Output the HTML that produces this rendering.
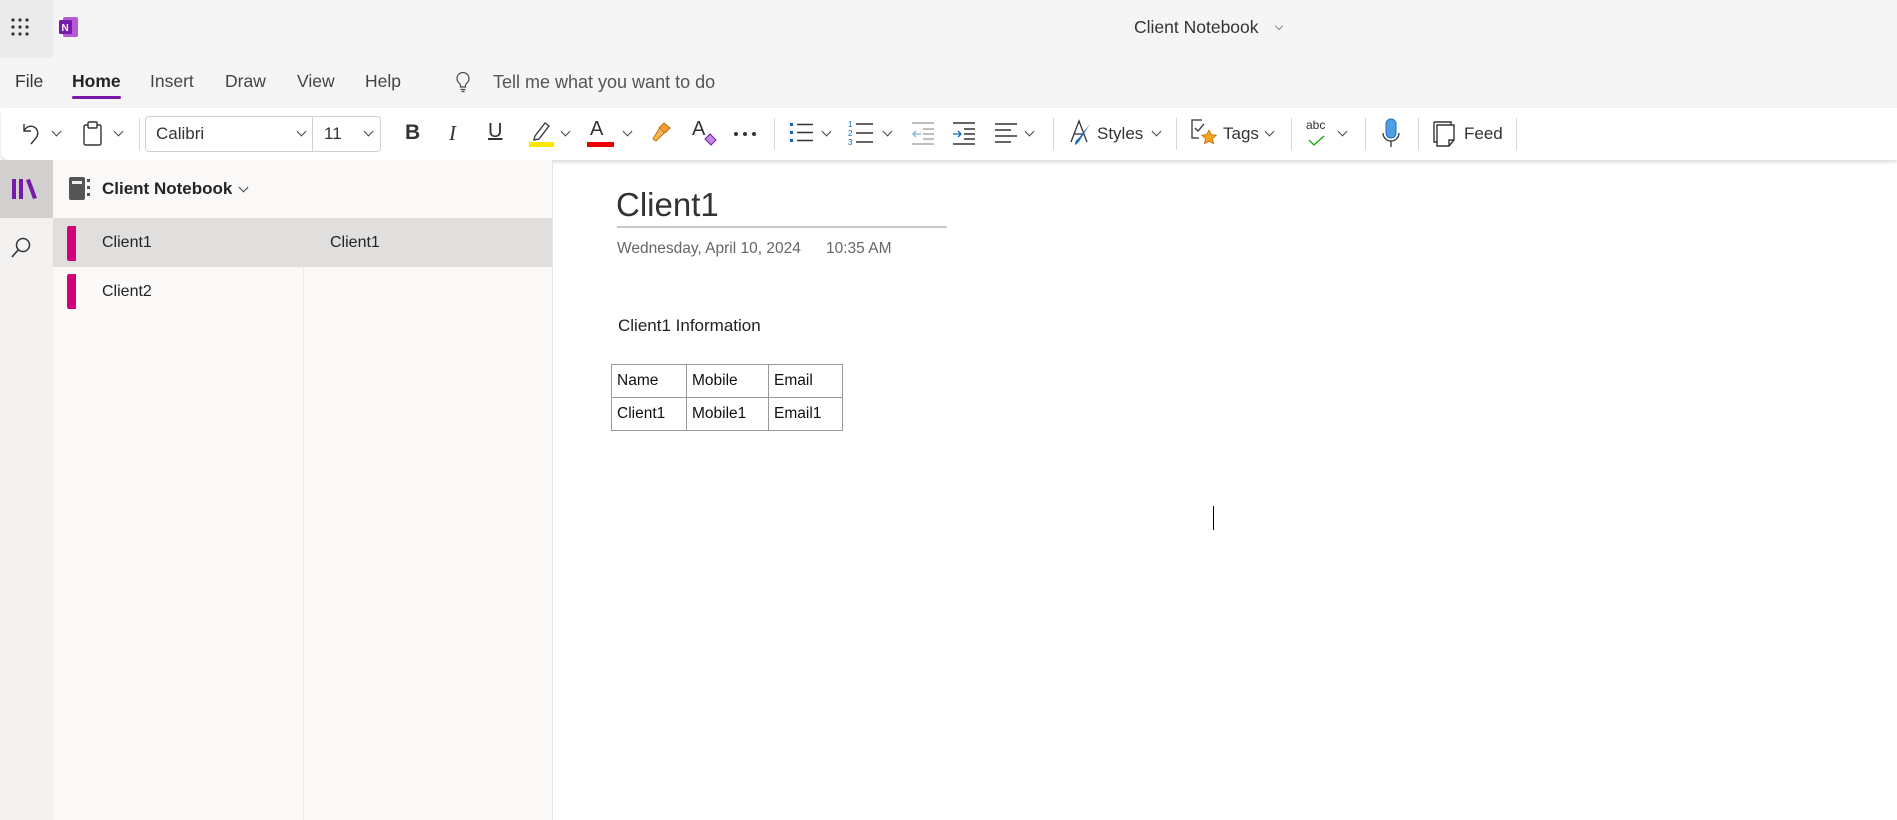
<!DOCTYPE html>
<html><head><meta charset="utf-8"><style>
*{margin:0;padding:0;box-sizing:border-box}
body{width:1897px;height:820px;overflow:hidden;background:#fff;font-family:"Liberation Sans",sans-serif;color:#242424;position:relative}
.a{position:absolute}
.t{position:absolute;white-space:nowrap}
.sep{position:absolute;top:118px;width:1px;height:32px;background:#d6d6d6}
.chev{position:absolute;width:7px;height:7px;border-right:1.4px solid #444;border-bottom:1.4px solid #444;transform:rotate(45deg)}
</style></head><body>
<div class="a" style="left:0;top:0;width:1897px;height:108px;background:#f5f5f5"></div>
<div class="a" style="left:0;top:0;width:53px;height:58px;background:#ebebeb"></div>
<svg class="a" style="left:10px;top:17px" width="20" height="20"><g fill="#333"><circle cx="3" cy="3" r="1.6"/><circle cx="10" cy="3" r="1.6"/><circle cx="17" cy="3" r="1.6"/><circle cx="3" cy="10" r="1.6"/><circle cx="10" cy="10" r="1.6"/><circle cx="17" cy="10" r="1.6"/><circle cx="3" cy="17" r="1.6"/><circle cx="10" cy="17" r="1.6"/><circle cx="17" cy="17" r="1.6"/></g></svg>
<svg class="a" style="left:58px;top:16px" width="22" height="22"><rect x="5" y="1" width="15" height="20" rx="2" fill="#b45ad3"/><rect x="1" y="4" width="13" height="14" rx="1.5" fill="#7719aa"/><text x="3.5" y="15" font-size="10" font-weight="bold" fill="#fff" font-family="Liberation Sans">N</text></svg>
<div class="t" style="left:1134px;top:17px;font-size:17.5px;color:#333">Client Notebook</div>
<div class="chev" style="left:1276px;top:23px;width:6px;height:6px;border-color:#888;border-width:1px"></div>
<div class="t" style="left:15px;top:71px;font-size:17.5px;color:#333">File</div>
<div class="t" style="left:72px;top:71px;font-size:17.5px;color:#242424;font-weight:bold">Home</div>
<div class="a" style="left:72px;top:96px;width:49px;height:3px;background:#7719aa;border-radius:2px"></div>
<div class="t" style="left:150px;top:71px;font-size:17.5px;color:#444">Insert</div>
<div class="t" style="left:225px;top:71px;font-size:17.5px;color:#444">Draw</div>
<div class="t" style="left:297px;top:71px;font-size:17.5px;color:#444">View</div>
<div class="t" style="left:365px;top:71px;font-size:17.5px;color:#444">Help</div>
<svg class="a" style="left:455px;top:71px" width="16" height="22"><path d="M8 1.5a6 6 0 0 0-3.5 10.9c.6.5 1 1.2 1 2V16h5v-1.6c0-.8.4-1.5 1-2A6 6 0 0 0 8 1.5zM5.5 18.5h5M6.5 20.5h3" fill="none" stroke="#444" stroke-width="1.2"/></svg>
<div class="t" style="left:493px;top:72px;font-size:18px;color:#555">Tell me what you want to do</div>
<div class="a" style="left:1px;top:108px;width:1896px;height:52px;background:#fff;border-radius:8px 0 0 8px;box-shadow:0 2px 4px rgba(0,0,0,.15)"></div>
<svg class="a" style="left:20px;top:121px" width="24" height="26"><path d="M4 3v7h7M4 10c2-4 6-6 10-4 4 2 5 7 2 11l-5 6" fill="none" stroke="#333" stroke-width="1.4"/></svg>
<div class="chev" style="left:53px;top:128px"></div>
<svg class="a" style="left:82px;top:120px" width="22" height="26"><rect x="2" y="5" width="17" height="20" rx="1.5" fill="none" stroke="#333" stroke-width="1.4"/><rect x="6" y="2" width="9" height="6" rx="1" fill="#fff" stroke="#333" stroke-width="1.4"/></svg>
<div class="chev" style="left:115px;top:128px"></div>
<div class="sep" style="left:139px"></div>
<div class="a" style="left:145px;top:116px;width:236px;height:36px;border:1px solid #d1d1d1;border-radius:4px"></div>
<div class="a" style="left:312px;top:117px;width:1px;height:34px;background:#d1d1d1"></div>
<div class="t" style="left:156px;top:124px;font-size:17px;color:#333">Calibri</div>
<div class="chev" style="left:298px;top:128px"></div>
<div class="t" style="left:324px;top:124px;font-size:17px;color:#333">11</div>
<div class="chev" style="left:365px;top:128px"></div>
<div class="t" style="left:405px;top:121px;font-size:21px;font-weight:bold;color:#333">B</div>
<div class="t" style="left:449px;top:121px;font-size:21px;font-style:italic;font-family:'Liberation Serif',serif;color:#333">I</div>
<div class="t" style="left:488px;top:120px;font-size:20px;text-decoration:underline;color:#333">U</div>
<svg class="a" style="left:527px;top:118px" width="28" height="30"><path d="M8 18l10-13 4 3-10 13-5 1z" fill="none" stroke="#333" stroke-width="1.3"/><rect x="2" y="24" width="25" height="5" fill="#ffe600"/></svg>
<div class="chev" style="left:562px;top:128px"></div>
<div class="t" style="left:590px;top:118px;font-size:20px;color:#333">A</div>
<div class="a" style="left:587px;top:142px;width:27px;height:5px;background:#e00"></div>
<div class="chev" style="left:624px;top:128px"></div>
<svg class="a" style="left:650px;top:120px" width="24" height="26"><path d="M14 3l6 5-5 5-6-5z" fill="#f0a030" stroke="#c56a00"/><path d="M9 9l-6 10 3 2 8-8" fill="#f7b955" stroke="#c56a00"/></svg>
<div class="t" style="left:692px;top:118px;font-size:20px;color:#333">A</div>
<svg class="a" style="left:704px;top:133px" width="14" height="14"><path d="M6 1l6 6-5 5-6-6z" fill="#c08be0" stroke="#7719aa"/></svg>
<svg class="a" style="left:733px;top:131px" width="24" height="6"><g fill="#333"><circle cx="3" cy="3" r="2"/><circle cx="12" cy="3" r="2"/><circle cx="21" cy="3" r="2"/></g></svg>
<div class="sep" style="left:774px"></div>
<svg class="a" style="left:789px;top:121px" width="26" height="24"><g fill="#0f6cbd"><rect x="1" y="2" width="3" height="3"/><rect x="1" y="10" width="3" height="3"/><rect x="1" y="18" width="3" height="3"/></g><g stroke="#333" stroke-width="1.4"><path d="M8 3.5h16M8 11.5h16M8 19.5h16"/></g></svg>
<div class="chev" style="left:823px;top:128px"></div>
<svg class="a" style="left:847px;top:119px" width="28" height="28"><g fill="#0f6cbd" font-size="8" font-family="Liberation Sans"><text x="1" y="8">1</text><text x="1" y="17">2</text><text x="1" y="26">3</text></g><g stroke="#333" stroke-width="1.4"><path d="M9 5h17M9 14h17M9 23h17"/></g></svg>
<div class="chev" style="left:884px;top:128px"></div>
<svg class="a" style="left:911px;top:121px" width="24" height="24"><g stroke="#aaa" stroke-width="1.4"><path d="M1 2h22M12 8h11M12 13h11M12 18h11M1 23h22"/></g><path d="M10 13H2m3-3-3 3 3 3" fill="none" stroke="#7fb3e0" stroke-width="1.3"/></svg>
<svg class="a" style="left:952px;top:121px" width="24" height="24"><g stroke="#333" stroke-width="1.4"><path d="M1 2h22M12 8h11M12 13h11M12 18h11M1 23h22"/></g><path d="M1 13h8m-3-3 3 3-3 3" fill="none" stroke="#0f6cbd" stroke-width="1.3"/></svg>
<svg class="a" style="left:994px;top:121px" width="24" height="24"><g stroke="#333" stroke-width="1.4"><path d="M1 3h22M1 9h16M1 15h22M1 21h16"/></g></svg>
<div class="chev" style="left:1026px;top:128px"></div>
<div class="sep" style="left:1053px"></div>
<svg class="a" style="left:1068px;top:118px" width="26" height="30"><path d="M3 24L11 3l8 21M6 16h10" fill="none" stroke="#333" stroke-width="1.3"/><path d="M22 6L12 22c-1 2-3 4-5 5 0-3 1-5 3-6z" fill="#0f6cbd"/></svg>
<div class="t" style="left:1097px;top:124px;font-size:17px;color:#333">Styles</div>
<div class="chev" style="left:1153px;top:128px"></div>
<div class="sep" style="left:1176px"></div>
<svg class="a" style="left:1190px;top:118px" width="28" height="30"><path d="M12 2H2v18h7" fill="none" stroke="#333" stroke-width="1.3"/><path d="M5 10l3 3 6-7" fill="none" stroke="#333" stroke-width="1.3"/><path d="M19 12l2.2 4.6 5 .6-3.7 3.4 1 5-4.5-2.5-4.5 2.5 1-5-3.7-3.4 5-.6z" fill="#f7a520" stroke="#c56a00" stroke-width=".8"/></svg>
<div class="t" style="left:1223px;top:124px;font-size:17px;color:#333">Tags</div>
<div class="chev" style="left:1266px;top:128px"></div>
<div class="sep" style="left:1291px"></div>
<div class="t" style="left:1306px;top:118px;font-size:12px;color:#333">abc</div>
<svg class="a" style="left:1307px;top:135px" width="20" height="12"><path d="M2 5l5 5 10-9" fill="none" stroke="#13a10e" stroke-width="1.3"/></svg>
<div class="chev" style="left:1339px;top:128px"></div>
<div class="sep" style="left:1365px"></div>
<svg class="a" style="left:1381px;top:118px" width="20" height="32"><rect x="5" y="1" width="10" height="19" rx="5" fill="#4f9ee6" stroke="#1d6fb8"/><path d="M2 15a8 8 0 0 0 16 0M10 23v6" fill="none" stroke="#333" stroke-width="1.3"/></svg>
<div class="sep" style="left:1418px"></div>
<svg class="a" style="left:1432px;top:120px" width="26" height="28"><path d="M5 5h17v15l-5 6H5z" fill="none" stroke="#333" stroke-width="1.4"/><path d="M2 2h17v3M2 2v20h3M22 20h-5v6" fill="none" stroke="#333" stroke-width="1.4"/></svg>
<div class="t" style="left:1464px;top:124px;font-size:17px;color:#333">Feed</div>
<div class="sep" style="left:1516px"></div>
<div class="a" style="left:0;top:160px;width:53px;height:660px;background:#f3f2f1"></div>
<div class="a" style="left:0;top:160px;width:53px;height:58px;background:#d2d0ce"></div>
<svg class="a" style="left:11px;top:178px" width="28" height="22"><g fill="#7719aa"><rect x="1" y="1" width="4" height="20"/><rect x="8" y="1" width="4" height="20"/><path d="M15 2l4-1 7 19-4 1z"/></g></svg>
<svg class="a" style="left:9px;top:236px" width="24" height="24"><circle cx="14" cy="9" r="6.5" fill="none" stroke="#333" stroke-width="1.5"/><path d="M9.5 13.5L3 21" stroke="#333" stroke-width="1.6"/></svg>
<div class="a" style="left:53px;top:160px;width:500px;height:660px;background:#faf9f8;border-right:1px solid #e5e5e5"></div>
<div class="a" style="left:303px;top:218px;width:1px;height:602px;background:#ebeae8"></div>
<svg class="a" style="left:68px;top:176px" width="24" height="26"><rect x="1" y="1" width="16" height="23" rx="2" fill="#555"/><rect x="4" y="5" width="10" height="3" fill="#eee"/><g fill="#555"><rect x="19" y="3" width="3" height="3"/><rect x="19" y="10" width="3" height="3"/><rect x="19" y="17" width="3" height="3"/></g></svg>
<div class="t" style="left:102px;top:179px;font-size:17px;font-weight:bold;color:#242424">Client Notebook</div>
<div class="chev" style="left:240px;top:184px"></div>
<div class="a" style="left:53px;top:218px;width:499px;height:49px;background:#e1dfdd"></div>
<svg class="a" style="left:64px;top:225px" width="14" height="38"><path d="M4 1h8v35H4l-1-2V3z" fill="#d3007a"/></svg>
<svg class="a" style="left:64px;top:273px" width="14" height="38"><path d="M4 1h8v35H4l-1-2V3z" fill="#d3007a"/></svg>
<div class="t" style="left:102px;top:234px;font-size:16px;color:#242424">Client1</div>
<div class="t" style="left:330px;top:234px;font-size:16px;color:#242424">Client1</div>
<div class="t" style="left:102px;top:283px;font-size:16px;color:#242424">Client2</div>
<div class="t" style="left:616px;top:186px;font-size:33px;color:#333">Client1</div>
<div class="a" style="left:617px;top:226px;width:330px;height:2px;background:#c8c8c8"></div>
<div class="t" style="left:617px;top:240px;font-size:15.5px;color:#666">Wednesday, April 10, 2024</div>
<div class="t" style="left:826px;top:240px;font-size:15.5px;color:#666">10:35 AM</div>
<div class="t" style="left:618px;top:316px;font-size:17px;color:#222">Client1 Information</div>
<table class="a" style="left:611px;top:364px;border-collapse:collapse;font-size:15.5px;color:#111">
<tr style="height:33px"><td style="width:75px;border:1px solid #999;padding:0 5px">Name</td><td style="width:82px;border:1px solid #999;padding:0 5px">Mobile</td><td style="width:74px;border:1px solid #999;padding:0 5px">Email</td></tr>
<tr style="height:33px"><td style="border:1px solid #999;padding:0 5px">Client1</td><td style="border:1px solid #999;padding:0 5px">Mobile1</td><td style="border:1px solid #999;padding:0 5px">Email1</td></tr>
</table>
<div class="a" style="left:1213px;top:506px;width:1px;height:24px;background:#000"></div>
</body></html>
